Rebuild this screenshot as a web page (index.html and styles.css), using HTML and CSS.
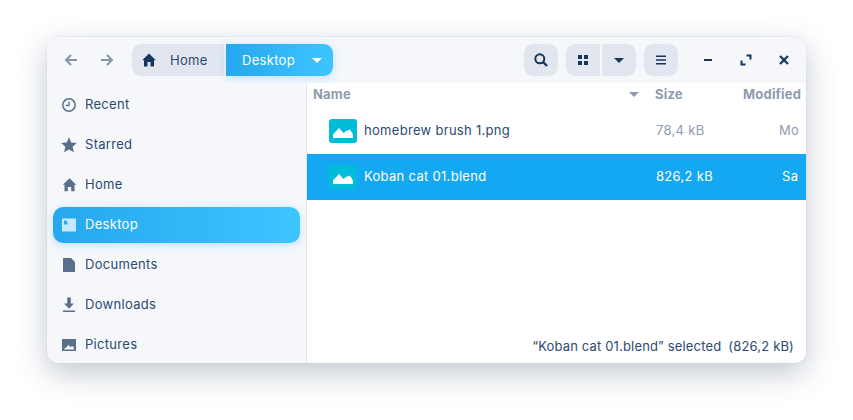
FILE: index.html
```html
<!DOCTYPE html>
<html lang="en">
<head>
<meta charset="utf-8">
<title>Desktop</title>
<link rel="stylesheet" href="styles.css">
</head>
<body>
<div class="window">
  <header class="toolbar">
    <div class="nav">
      <button class="flat"><svg width="16" height="16" viewBox="0 0 16 16" class="ico-grey"><path d="M14 8H3M8 3L3 8l5 5" fill="none" stroke="currentColor" stroke-width="2"/></svg></button>
      <button class="flat"><svg width="16" height="16" viewBox="0 0 16 16" class="ico-grey"><path d="M2 8h11M8 3l5 5-5 5" fill="none" stroke="currentColor" stroke-width="2"/></svg></button>
    </div>
    <div class="path">
      <div class="crumb-home">
        <svg width="14" height="14" viewBox="0 0 14 14" class="ico-dark"><path d="M7 .5L.2 7.200H2v6.300h3.500V9h3v4.500H12V7.200h1.800z" fill="currentColor"/></svg>
        <span>Home</span>
      </div>
      <div class="crumb-current">
        <span>Desktop</span>
        <svg width="10" height="5" viewBox="0 0 10 5"><path d="M0 0h10L5 5z" fill="currentColor"/></svg>
      </div>
    </div>
    <div class="spacer"></div>
    <button class="tool"><svg width="16" height="16" viewBox="0 0 16 16" class="ico-dark"><circle cx="6.800" cy="6.800" r="4.500" fill="none" stroke="currentColor" stroke-width="2"/><path d="M10 10l4 4" stroke="currentColor" stroke-width="2.400"/></svg></button>
    <div class="split">
      <button class="tool left"><svg width="12" height="12" viewBox="0 0 12 12" class="ico-dark"><path d="M1 1h4v4H1zM7 1h4v4H7zM1 7h4v4H1zM7 7h4v4H7z" fill="currentColor"/></svg></button>
      <button class="tool right"><svg width="10" height="5" viewBox="0 0 10 5" class="ico-dark"><path d="M0 0h10L5 5z" fill="currentColor"/></svg></button>
    </div>
    <button class="tool"><svg width="12" height="12" viewBox="0 0 12 12" class="ico-dark"><path d="M1 1.500h10v1.600H1zM1 5.200h10v1.600H1zM1 8.900h10v1.600H1z" fill="currentColor"/></svg></button>
    <div class="controls">
      <button class="ctl"><svg width="10" height="10" viewBox="0 0 10 10" class="ico-dark"><path d="M1 4h8v2H1z" fill="currentColor"/></svg></button>
      <button class="ctl"><svg width="12" height="12" viewBox="0 0 12 12" class="ico-dark"><path d="M6.500 1.500h4v4M1.500 6.500v4h4" fill="none" stroke="currentColor" stroke-width="2"/></svg></button>
      <button class="ctl"><svg width="10" height="10" viewBox="0 0 10 10" class="ico-dark"><path d="M1 1l8 8M9 1l-8 8" stroke="currentColor" stroke-width="2.200"/></svg></button>
    </div>
  </header>
  <div class="main">
    <nav class="sidebar">
      <a class="place"><svg width="16" height="16" viewBox="0 0 16 16"><circle cx="8" cy="8" r="6.200" fill="none" stroke="currentColor" stroke-width="1.500"/><path d="M8 4.500V8.500H4.800" fill="none" stroke="currentColor" stroke-width="1.300"/></svg><span>Recent</span></a>
      <a class="place"><svg width="16" height="16" viewBox="0 0 16 16"><path d="M8 .3l2.300 5.200 5.500.5-4.200 3.700 1.300 5.600L8 12.400l-4.900 2.900 1.300-5.600L.2 6l5.500-.5z" fill="currentColor"/></svg><span>Starred</span></a>
      <a class="place"><svg width="16" height="16" viewBox="0 0 16 16"><path d="M8.500 1.300L1.800 7.800h1.700v6.400h3.300V10h3.400v4.200h3.300V7.800h1.700z" fill="currentColor"/></svg><span>Home</span></a>
      <a class="place active"><svg width="16" height="16" viewBox="0 0 16 16"><path d="M1 1.500h14v13H1z" fill="#c6e9fd"/><path d="M3 3.500h2l1.500 1.500v2.500H3z" fill="#2aa9ee"/></svg><span>Desktop</span></a>
      <a class="place"><svg width="16" height="16" viewBox="0 0 16 16"><path d="M2 1h8l4 4v10H2z" fill="currentColor"/></svg><span>Documents</span></a>
      <a class="place"><svg width="16" height="16" viewBox="0 0 16 16"><path d="M6.200 .5h3.600v6h3.200L8 11.800 3 6.500h3.200zM2 13.500h12V15H2z" fill="currentColor"/></svg><span>Downloads</span></a>
      <a class="place"><svg width="16" height="16" viewBox="0 0 16 16"><path fill-rule="evenodd" d="M1 2h14v12H1zM3 12.500h10l-.5-2.500-1.500-1-1.500 1.300-2-2.500-1.800 2.200-1.700 1z" fill="currentColor"/></svg><span>Pictures</span></a>
    </nav>
    <section class="content">
      <div class="cols">
        <span class="col-name">Name</span>
        <svg class="sort" width="10" height="5" viewBox="0 0 10 5"><path d="M0 0h10L5 5z" fill="currentColor"/></svg>
        <span class="col-size">Size</span>
        <span class="col-mod">Modified</span>
      </div>
      <div class="row">
        <svg class="thumb" width="28" height="24" viewBox="0 0 28 24"><rect width="28" height="24" rx="3" fill="#00bcd9"/><path d="M4 19v-3.500L10 9l4.500 5 2.500-2 4-1.500 3 5V19z" fill="#fff"/></svg>
        <span class="fname">homebrew brush 1.png</span>
        <span class="fsize">78,4 kB</span>
        <span class="fdate">Mo</span>
      </div>
      <div class="row selected">
        <svg class="thumb" width="28" height="24" viewBox="0 0 28 24"><rect width="28" height="24" rx="3" fill="#00bcd9"/><path d="M4 19v-3.500L10 9l4.500 5 2.500-2 4-1.500 3 5V19z" fill="#fff"/></svg>
        <span class="fname">Koban cat 01.blend</span>
        <span class="fsize">826,2 kB</span>
        <span class="fdate">Sa</span>
      </div>
      <div class="status"><span>“Koban cat 01.blend” selected</span><span>(826,2 kB)</span></div>
    </section>
  </div>
</div>
</body>
</html>
```

FILE: styles.css
```css
* { box-sizing: border-box; }
html, body { margin: 0; height: 100%; }
body {
  background: #fff;
  padding: 37px 47px 57px;
  font-family: Inter, "Liberation Sans", sans-serif;
  font-size: 13px;
  letter-spacing: 0.3px;
  color: #2c4a70;
  overflow: hidden;
}
button { border: 0; padding: 0; margin: 0; background: none; display: flex; align-items: center; justify-content: center; }
.window {
  width: 759px;
  height: 326px;
  border-radius: 12px;
  overflow: hidden;
  background: #f5f7fb;
  display: flex;
  flex-direction: column;
  box-shadow: 0 0 0 1px rgba(200, 208, 220, .25), 0 10px 30px rgba(50, 70, 95, .3);
}
.toolbar {
  height: 46px;
  flex: none;
  display: flex;
  align-items: center;
  padding: 0 3px 0 6px;
  background: #f5f7fb;
}
.nav { display: flex; width: 79px; }
.flat { width: 36px; height: 32px; }
.ico-grey { color: #8695aa; }
.ico-dark { color: #16365c; }
.path { display: flex; height: 32px; border-radius: 9px; }
.crumb-home {
  width: 92px;
  background: #e2e6ef;
  border-radius: 9px 0 0 9px;
  display: flex;
  align-items: center;
  gap: 14px;
  padding-left: 10px;
  color: #2c4a70;
}
.crumb-current {
  width: 107px;
  margin-left: 2px;
  border-radius: 0 9px 9px 0;
  background: linear-gradient(90deg, #26a7ee, #3dc5ff);
  box-shadow: 0 2px 8px rgba(60, 180, 250, .3);
  color: #fff;
  display: flex;
  align-items: center;
  justify-content: space-between;
  padding: 0 11px 0 16px;
}
.spacer { flex: 1; }
.tool { width: 34px; height: 32px; background: #e2e6ef; border-radius: 9px; margin-right: 8px; flex: none; }
.split { display: flex; gap: 2px; margin-right: 8px; }
.split .tool { margin: 0; }
.split .left { border-radius: 9px 0 0 9px; }
.split .right { border-radius: 0 9px 9px 0; }
.controls { display: flex; margin-left: 3px; }
.ctl { width: 38px; height: 32px; }
.main { flex: 1; display: flex; min-height: 0; }
.sidebar {
  width: 260px;
  flex: none;
  border-right: 1px solid #e1e5ee;
  padding: 4px 6px 0;
  display: flex;
  flex-direction: column;
  gap: 4px;
  background: #f5f7fb;
}
.place {
  height: 36px;
  flex: none;
  display: flex;
  align-items: center;
  gap: 8px;
  padding-left: 8px;
  border-radius: 10px;
  color: #2c4a70;
}
.place svg { color: #586f8e; flex: none; }
.place span { padding-bottom: 2px; }
.active {
  background: linear-gradient(90deg, #26a7ee, #3dc5ff);
  box-shadow: 0 2px 8px rgba(60, 180, 250, .3);
  color: #fff;
}
.content { flex: 1; background: #fff; position: relative; display: flex; flex-direction: column; min-width: 0; }
.cols {
  height: 25px;
  display: flex;
  align-items: center;
  font-weight: 700;
  letter-spacing: 0.2px;
  color: #8f9bb0;
  padding: 0 0 3px 6px;
  flex: none;
  white-space: nowrap;
}
.col-name { width: 316px; }
.sort { width: 10px; color: #8f9bb0; margin-right: 16px; }
.col-size { width: 88px; }
.row {
  height: 46px;
  display: flex;
  align-items: center;
  padding-left: 22px;
  flex: none;
  white-space: nowrap;
}
.row span { padding-bottom: 2px; }
.thumb { flex: none; }
.fname { width: 292px; margin-left: 7px; color: #2c4a70; }
.fsize { width: 123px; color: #8f9bb0; }
.fdate { color: #8f9bb0; }
.selected { background: #14a7f2; }
.selected span { color: #fff; }
.selected .fdate { margin-left: 3px; }
.status {
  position: absolute;
  right: 12px;
  bottom: 9px;
  display: flex;
  gap: 7px;
  letter-spacing: 0.16px;
  color: #2c4a70;
  white-space: nowrap;
}
```
